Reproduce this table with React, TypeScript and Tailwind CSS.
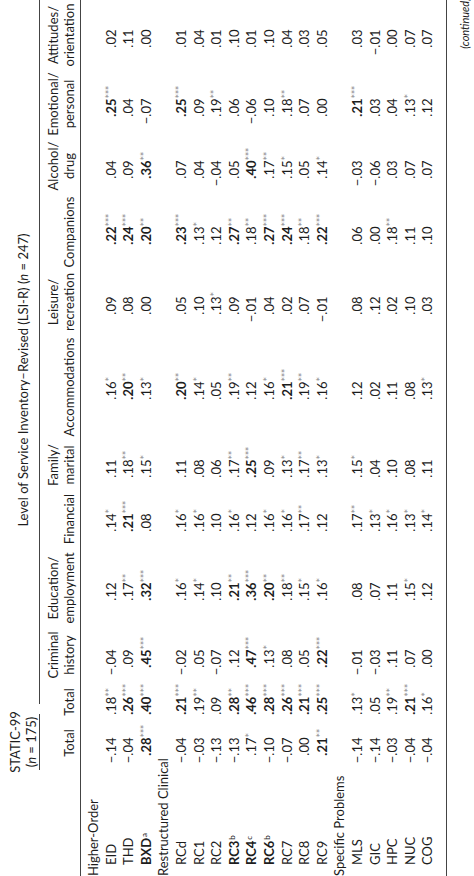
import React from "react"

const GRID =
  "grid grid-cols-[112px_42px_40px_54px_80px_58px_50px_106px_64px_76px_56px_68px_70px]"

const heads: [string, string][] = [
  ["", "Total"],
  ["", "Total"],
  ["Criminal", "history"],
  ["Education/", "employment"],
  ["", "Financial"],
  ["Family/", "marital"],
  ["", "Accommodations"],
  ["Leisure/", "recreation"],
  ["", "Companions"],
  ["Alcohol/", "drug"],
  ["Emotional/", "personal"],
  ["Attitudes/", "orientation"],
]

type Row = { label: string; section?: boolean; bold?: boolean; sup?: string; v?: string[] }

// "!" in front of a value = bold
const rows: Row[] = [
  { label: "Higher-Order", section: true },
  { label: "EID", v: ["−.14", ".18**", "−.04", ".12", ".14*", ".11", ".16*", ".09", "!.22***", ".04", "!.25***", ".02"] },
  { label: "THD", v: ["−.04", "!.26***", ".09", ".17**", "!.21***", ".18**", "!.20**", ".08", "!.24***", ".09", ".04", ".11"] },
  { label: "BXD", sup: "a", bold: true, v: ["!.28***", "!.40***", "!.45***", "!.32***", ".08", ".15*", ".13*", ".00", "!.20**", "!.36**", "−.07", ".00"] },
  { label: "Restructured Clinical", section: true },
  { label: "RCd", v: ["−.04", "!.21***", "−.02", ".16*", ".16*", ".11", "!.20**", ".05", "!.23***", ".07", "!.25***", ".01"] },
  { label: "RC1", v: ["−.03", ".19**", ".05", ".14*", ".16*", ".08", ".14*", ".10", ".13*", ".04", ".09", ".04"] },
  { label: "RC2", v: ["−.13", ".09", "−.07", ".10", ".10", ".06", ".05", ".13*", ".12", "−.04", ".19**", ".01"] },
  { label: "RC3", sup: "b", bold: true, v: ["−.13", "!.28**", ".12", "!.21**", ".16*", ".17**", ".19**", ".09", "!.27**", ".05", ".06", ".10"] },
  { label: "RC4", sup: "c", bold: true, v: [".17*", "!.46***", "!.47***", "!.36***", ".12", "!.25***", ".12", "−.01", ".18**", "!.40***", "−.06", ".01"] },
  { label: "RC6", sup: "b", bold: true, v: ["−.10", "!.28***", ".13*", "!.20**", ".16*", ".09", ".16*", ".04", "!.27***", ".17**", ".10", ".10"] },
  { label: "RC7", v: ["−.07", "!.26***", ".08", ".18**", ".16*", ".13*", "!.21***", ".02", "!.24***", ".15*", ".18**", ".04"] },
  { label: "RC8", v: [".00", "!.21***", ".05", ".15*", ".17**", ".17**", ".19**", ".07", ".18**", ".05", ".07", ".03"] },
  { label: "RC9", v: ["!.21**", "!.25***", "!.22***", ".16*", ".12", ".13*", ".16*", "−.01", "!.22***", ".14*", ".00", ".05"] },
  { label: "Specific Problems", section: true },
  { label: "MLS", v: ["−.14", ".13*", "−.01", ".08", ".17**", ".15*", ".12", ".08", ".06", "−.03", "!.21***", ".03"] },
  { label: "GIC", v: ["−.14", ".05", "−.03", ".07", ".13*", ".04", ".02", ".12", ".00", "−.06", ".03", "−.01"] },
  { label: "HPC", v: ["−.03", ".19**", ".11", ".11", ".16*", ".10", ".11", ".02", ".18**", ".03", ".04", ".00"] },
  { label: "NUC", v: ["−.04", "!.21***", ".07", ".15*", ".13*", ".08", ".08", ".10", ".11", ".07", ".13*", ".07"] },
  { label: "COG", v: ["−.04", ".16*", ".00", ".12", ".14*", ".11", ".13*", ".03", ".10", ".07", ".12", ".07"] },
]

function Cell({ raw }: { raw: string }) {
  const bold = raw.startsWith("!")
  const s = bold ? raw.slice(1) : raw
  const m = s.match(/^([^*]+)(\**)$/)
  const num = m ? m[1] : s
  const stars = m ? m[2] : ""
  return (
    <div className="flex justify-center">
      <span className={`w-[26px] text-right ${bold ? "font-bold" : ""}`}>{num}</span>
      <span className="w-[15px] text-left text-[11px] leading-none pt-[1px] text-[#8c8c8c] tracking-[-0.5px]">
        {stars}
      </span>
    </div>
  )
}

export default function App() {
  return (
    <div className="w-[474px] h-[876px] overflow-hidden bg-white">
      <div className="w-[876px] h-[474px] origin-top-left -rotate-90 translate-y-[876px] font-['Lato',sans-serif] text-[13px] text-[#1d1d1d]">
        {/* spanner titles */}
        <div className="flex h-[40px]">
          <div className="w-[106px]" />
          <div className="w-[56px] flex flex-col items-center justify-end">
            <div className="whitespace-nowrap leading-[16px]">STATIC-99</div>
            <div className="whitespace-nowrap leading-[16px]">
              (<i>n</i> = 175)
            </div>
            <div className="w-full h-px bg-[#444]" />
          </div>
          <div className="w-[10px]" />
          <div className="flex-1 flex flex-col justify-end">
            <div className="text-center whitespace-nowrap leading-[16px] mb-[8px] pr-[56px]">
              Level of Service Inventory–Revised (LSI-R) (<i>n</i> = 247)
            </div>
            <div className="h-px bg-[#444]" />
          </div>
        </div>

        {/* column heads */}
        <div className={`${GRID} h-[41px] border-b border-[#444] items-end pb-[3px]`}>
          <div />
          {heads.map(([a, b], i) => (
            <div key={i} className="flex flex-col items-center leading-[16px] whitespace-nowrap">
              {a && <span>{a}</span>}
              <span>{b}</span>
            </div>
          ))}
        </div>

        {/* body */}
        <div className="h-[366px] border-b border-[#444] pt-[4px]">
          {rows.map((r) => (
            <div key={r.label} className={`${GRID} h-[17.6px] leading-[17.6px]`}>
              <div className={`whitespace-nowrap ${r.section ? "" : "pl-[11px]"} ${r.bold ? "font-bold" : ""}`}>
                {r.label}
                {r.sup && <sup className="text-[8px] font-normal ml-[1px]">{r.sup}</sup>}
              </div>
              {r.v?.map((x, i) => <Cell key={i} raw={x} />)}
            </div>
          ))}
        </div>

        <div className="text-right italic text-[11px] mt-[10px] mr-[-2px]">(continued)</div>
      </div>
    </div>
  )
}
